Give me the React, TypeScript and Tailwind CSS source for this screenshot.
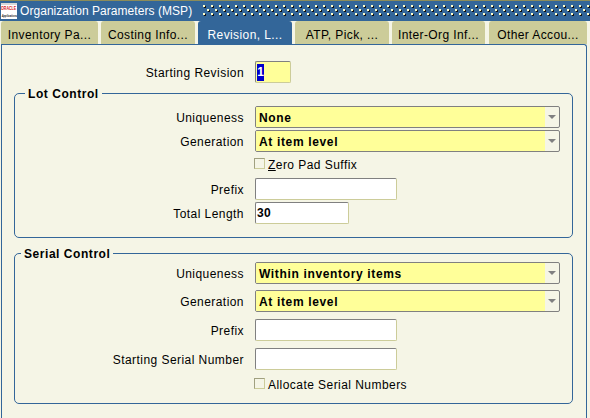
import React from "react";

const font = { fontFamily: '"Liberation Sans", Arial, sans-serif' };

function Tab({ label, active, w }: { label: string; active?: boolean; w: string }) {
  return (
    <div className={`${w} h-[23px] pt-[4px] flex items-center justify-center text-[12px] tracking-[0.4px] rounded-t-[3px] shrink-0 whitespace-nowrap ${active ? "bg-[#336699] text-white" : "bg-[#cccc99] text-black"}`}>
      {label}
    </div>
  );
}

function Row({ label, mt, labelW = "w-[229px]", children }: { label: string; mt: string; labelW?: string; children: React.ReactNode }) {
  return (
    <div className={`flex items-center h-[22px] ${mt}`}>
      <div className={`${labelW} pt-[2px] text-right text-[12px] tracking-[0.45px] text-black shrink-0 whitespace-nowrap`}>{label}</div>
      <div className="ml-[11px] flex">{children}</div>
    </div>
  );
}

function Select({ value }: { value: string }) {
  return (
    <div className="w-[305px] h-[22px] flex rounded-[2px] border border-[#808080] bg-[#f5f5e6] overflow-hidden">
      <div className="flex-1 bg-[#ffff99] pl-[3px] pt-px flex items-center text-[12px] font-bold tracking-[0.65px] text-black">{value}</div>
      <div className="w-[14px] flex items-center justify-center">
        <div className="w-0 h-0 border-l-[4px] border-r-[4px] border-t-[4px] border-l-transparent border-r-transparent border-t-[#808080]" />
      </div>
    </div>
  );
}

function TextField({ w, value }: { w: string; value?: string }) {
  return (
    <div className={`${w} h-[22px] bg-white rounded-[2px] border border-[#cccc99] border-t-[#808080] border-l-[#808080] flex items-center pl-[1px] text-[12px] font-bold tracking-[0.3px] text-black`}>
      {value}
    </div>
  );
}

function Check({ label, mt }: { label: React.ReactNode; mt: string }) {
  return (
    <div className={`flex items-center ml-[239px] h-[11px] ${mt}`}>
      <div className="w-[11px] h-[11px] border border-[#cccc99] border-t-[#a0a080] border-l-[#a0a080] bg-[#f5f5e6] shrink-0" />
      <div className="ml-[3px] mt-[3px] text-[12px] tracking-[0.45px] text-black whitespace-nowrap">{label}</div>
    </div>
  );
}

function Group({ title, left, h, pt, children }: { title: string; left: string; h: string; pt: string; children: React.ReactNode }) {
  return (
    <div className={`relative ml-[12px] mr-[13px] ${h} ${pt} border border-[#336699] rounded-[5px]`}>
      <div className={`absolute -top-[7px] ${left} bg-[#f5f5e6] px-[3px] h-[14px] leading-[14px] text-[12px] font-bold tracking-[0.55px] text-black whitespace-nowrap`}>{title}</div>
      {children}
    </div>
  );
}

export default function App() {
  return (
    <div className="w-[590px] h-[418px] bg-[#f5f5e6] overflow-hidden flex flex-col" style={font}>
      <div className="h-[21px] bg-[#336699] border-t border-[#8c8c5a] flex items-center shrink-0">
        <svg width="16" height="16" viewBox="0 0 16 16" className="ml-px shrink-0">
          <rect width="16" height="16" fill="#ffffff" />
          <rect width="16" height="2" fill="#d8d8d8" />
          <text x="0" y="7.5" fontSize="5" fontWeight="700" fill="#d81818" transform="scale(0.72 1)">ORACLE</text>
          <text x="1" y="14" fontSize="4" fontStyle="italic" fontWeight="700" fill="#222222" transform="scale(0.65 1)">Applications</text>
        </svg>
        <div className="w-[183px] ml-[3px] text-[12px] tracking-[0.05px] text-white whitespace-nowrap shrink-0">Organization Parameters (MSP)</div>
        <svg className="shrink-0" width="390" height="12" viewBox="0 0 390 12" shapeRendering="crispEdges">
          <defs>
            <pattern id="dots" width="8" height="8" patternUnits="userSpaceOnUse">
              <rect x="0" y="0" width="2" height="2" fill="#ffffcc" />
              <rect x="2" y="1" width="1" height="2" fill="#111111" />
              <rect x="1" y="2" width="1" height="1" fill="#111111" />
              <rect x="4" y="4" width="2" height="2" fill="#ffffcc" />
              <rect x="6" y="5" width="1" height="2" fill="#111111" />
              <rect x="5" y="6" width="1" height="1" fill="#111111" />
            </pattern>
          </defs>
          <rect width="390" height="12" fill="url(#dots)" />
        </svg>
      </div>
      <div className="flex items-end h-[23px] shrink-0 pl-[1px] gap-[3px]">
        <Tab label="Inventory Pa..." w="w-[97px]" />
        <Tab label="Costing Info..." w="w-[94px]" />
        <Tab label="Revision, L..." active w="w-[94px]" />
        <Tab label="ATP, Pick, ..." w="w-[94px]" />
        <Tab label="Inter-Org Inf..." w="w-[93px]" />
        <div className="ml-px"><Tab label="Other Accou..." w="w-[98px]" /></div>
      </div>
      <div className="flex-1 mr-[3px] ml-px border-t border-l border-r border-[#336699] rounded-tr-[3px] flex flex-col">
        <Row label="Starting Revision" mt="mt-[16px]" labelW="w-[242px]">
          <div className="w-[36px] h-[22px] bg-[#ffff99] rounded-[2px] border border-[#cccc99] border-t-[#808080] border-l-[#808080] flex items-center pl-[1px]">
            <span className="w-[7px] h-[17px] bg-[#0000cc] text-white text-[12px] font-bold leading-[17px] text-center">1</span>
          </div>
        </Row>
        <div className="mt-[10px]">
          <Group title="Lot Control" left="left-[10px]" h="h-[145px]" pt="pt-[12px]">
            <Row label="Uniqueness" mt=""><Select value="None" /></Row>
            <Row label="Generation" mt="mt-[2px]"><Select value="At item level" /></Row>
            <Check label={<><u>Z</u>ero Pad Suffix</>} mt="mt-[6px]" />
            <Row label="Prefix" mt="mt-[9px]"><TextField w="w-[142px]" /></Row>
            <Row label="Total Length" mt="mt-[2px]"><TextField w="w-[94px]" value="30" /></Row>
          </Group>
        </div>
        <div className="mt-[15px]">
          <Group title="Serial Control" left="left-[6px]" h="h-[151px]" pt="pt-[8px]">
            <Row label="Uniqueness" mt=""><Select value="Within inventory items" /></Row>
            <Row label="Generation" mt="mt-[6px]"><Select value="At item level" /></Row>
            <Row label="Prefix" mt="mt-[7px]"><TextField w="w-[142px]" /></Row>
            <Row label="Starting Serial Number" mt="mt-[7px]"><TextField w="w-[142px]" /></Row>
            <Check label="Allocate Serial Numbers" mt="mt-[8px]" />
          </Group>
        </div>
      </div>
    </div>
  );
}
